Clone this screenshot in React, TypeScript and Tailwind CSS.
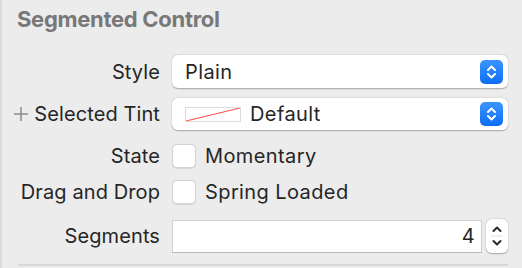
function Stepper() {
    return (
        <div className="flex h-[24px] w-[23px] shrink-0 items-center justify-center rounded-[5px] bg-gradient-to-b from-[#3b95ff] to-[#0a6cf5]">
            <svg width="11" height="16" viewBox="0 0 11 16" fill="none" stroke="white" strokeWidth="2" strokeLinecap="round" strokeLinejoin="round">
                <path d="M2 6 L5.5 2.5 L9 6" />
                <path d="M2 10 L5.5 13.5 L9 10" />
            </svg>
        </div>
    );
}

function Popup({ children, className }: { children: React.ReactNode; className: string }) {
    return (
        <div className={`flex items-center rounded-[6px] bg-white pl-[13px] pr-[5px] shadow-[0_0.5px_1.5px_rgba(0,0,0,0.3)] ${className}`}>
            <div className="flex flex-1 items-center">{children}</div>
            <Stepper />
        </div>
    );
}

function Checkbox({ label }: { label: string }) {
    return (
        <div className="flex items-center gap-[9px]">
            <div className="h-[24px] w-[24px] rounded-[5px] border border-[#d4d4d4] bg-white shadow-[0_0.5px_1px_rgba(0,0,0,0.1)]" />
            <span>{label}</span>
        </div>
    );
}

export default function App() {
    return (
        <div
            className="relative h-[268px] w-[522px] overflow-hidden border-l-2 border-[#d9d9d9] bg-[#ececec] text-[20px] leading-[24px] tracking-[0.4px] text-[#262626]"
            style={{ fontFamily: 'Inter, "Liberation Sans", sans-serif' }}
        >
            <h1 className="pl-[15px] pt-[5px] text-[22px] font-bold leading-[28px] tracking-[-0.3px] text-[#787878]">Segmented Control</h1>

            <div className="mt-[22px] grid grid-cols-[158px_1fr] items-center gap-x-[12px] pr-[14px]">
                <div className="text-right tracking-[0.1px]">Style</div>
                <Popup className="h-[33px]">
                    <span>Plain</span>
                </Popup>

                <div className="mt-[10px] flex items-center justify-between pl-[12px] tracking-[0.1px]">
                    <svg width="14" height="14" viewBox="0 0 14 14" stroke="#8c8c8c" strokeWidth="1.5">
                        <line x1="7" y1="0" x2="7" y2="14" />
                        <line x1="0" y1="7" x2="14" y2="7" />
                    </svg>
                    <span>Selected Tint</span>
                </div>
                <Popup className="mt-[10px] h-[32px]">
                    <div className="relative mr-[9px] h-[15px] w-[56px] border border-[#dcdcdc]">
                        <svg className="absolute inset-0" width="100%" height="100%" viewBox="0 0 56 15" preserveAspectRatio="none">
                            <line x1="0" y1="15" x2="56" y2="0" stroke="#ff3b30" strokeWidth="1" />
                        </svg>
                    </div>
                    <span>Default</span>
                </Popup>

                <div className="mt-[14px] text-right tracking-[0.1px]">State</div>
                <div className="mt-[14px]">
                    <Checkbox label="Momentary" />
                </div>

                <div className="mt-[12px] text-right tracking-[0.1px]">Drag and Drop</div>
                <div className="mt-[12px]">
                    <Checkbox label="Spring Loaded" />
                </div>

                <div className="mt-[15px] text-right tracking-[0.1px]">Segments</div>
                <div className="mt-[15px] flex items-center gap-[4px]">
                    <div className="flex h-[33px] flex-1 items-center justify-end border border-[#d0d0d0] border-b-[#b9b9b9] bg-white pr-[6px]">
                        4
                    </div>
                    <div className="flex h-[34px] w-[22px] flex-col items-center justify-center rounded-[6px] bg-white shadow-[0_0.5px_1.5px_rgba(0,0,0,0.3)]">
                        <svg width="12" height="28" viewBox="0 0 12 28" fill="none" stroke="#2a2a2a" strokeWidth="2" strokeLinecap="round" strokeLinejoin="round">
                            <path d="M2.5 9 L6 5.5 L9.5 9" />
                            <line x1="0" y1="14" x2="12" y2="14" stroke="#e0e0e0" strokeWidth="1" />
                            <path d="M2.5 19 L6 22.5 L9.5 19" />
                        </svg>
                    </div>
                </div>
            </div>

            <div className="ml-[16px] mr-[14px] mt-[11px] h-[2px] bg-[#d8d8d8]" />
        </div>
    );
}
